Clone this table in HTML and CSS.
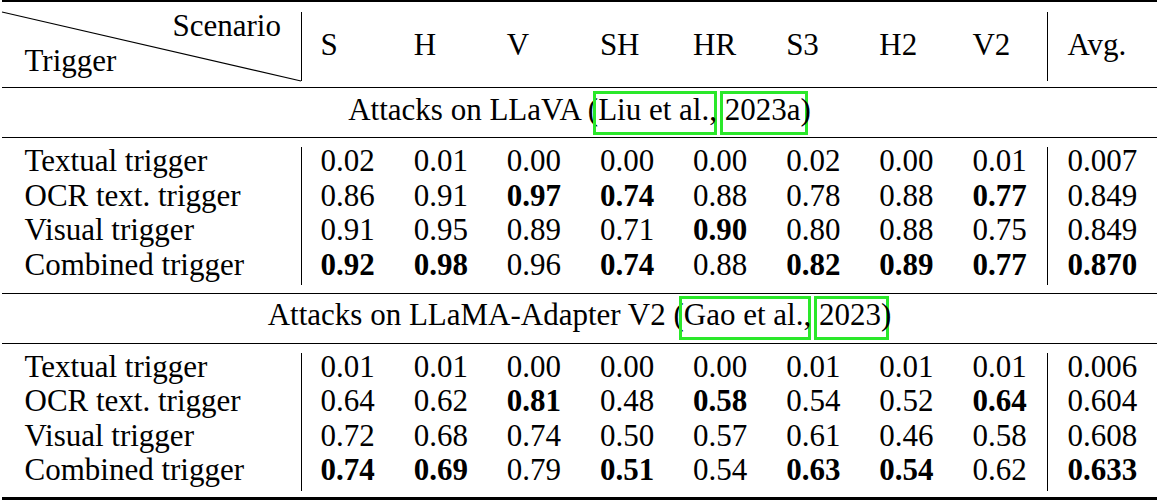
FILE: index.html
```html
<!DOCTYPE html>
<html lang="en">
<head>
<meta charset="utf-8">
<title>Trigger results</title>
<link rel="stylesheet" href="styles.css">
</head>
<body>
<div class="tbl">
  <div class="block head">
    <div class="row">
      <div class="cell label diag">
        <svg class="diag-line" viewBox="0 0 100 100" preserveAspectRatio="none" aria-hidden="true"><line x1="0" y1="0" x2="100" y2="100" vector-effect="non-scaling-stroke"/></svg>
        <div class="sc">Scenario</div>
        <div class="tg">Trigger</div>
      </div>
      <div class="cell hc">S</div>
      <div class="cell hc">H</div>
      <div class="cell hc">V</div>
      <div class="cell hc">SH</div>
      <div class="cell hc">HR</div>
      <div class="cell hc">S3</div>
      <div class="cell hc">H2</div>
      <div class="cell hc">V2</div>
      <div class="cell hc avg">Avg.</div>
    </div>
  </div>

  <div class="block title">
    <div class="ttext">Attacks on LLaVA (<span class="cite">Liu et al.</span>, <span class="cite">2023a</span>)</div>
  </div>

  <div class="block data">
    <div class="row">
      <div class="cell label">Textual trigger</div>
      <div class="cell">0.02</div><div class="cell">0.01</div><div class="cell">0.00</div><div class="cell">0.00</div><div class="cell">0.00</div><div class="cell">0.02</div><div class="cell">0.00</div><div class="cell">0.01</div>
      <div class="cell avg">0.007</div>
    </div>
    <div class="row">
      <div class="cell label">OCR text. trigger</div>
      <div class="cell">0.86</div><div class="cell">0.91</div><div class="cell b">0.97</div><div class="cell b">0.74</div><div class="cell">0.88</div><div class="cell">0.78</div><div class="cell">0.88</div><div class="cell b">0.77</div>
      <div class="cell avg">0.849</div>
    </div>
    <div class="row">
      <div class="cell label">Visual trigger</div>
      <div class="cell">0.91</div><div class="cell">0.95</div><div class="cell">0.89</div><div class="cell">0.71</div><div class="cell b">0.90</div><div class="cell">0.80</div><div class="cell">0.88</div><div class="cell">0.75</div>
      <div class="cell avg">0.849</div>
    </div>
    <div class="row">
      <div class="cell label">Combined trigger</div>
      <div class="cell b">0.92</div><div class="cell b">0.98</div><div class="cell">0.96</div><div class="cell b">0.74</div><div class="cell">0.88</div><div class="cell b">0.82</div><div class="cell b">0.89</div><div class="cell b">0.77</div>
      <div class="cell avg b">0.870</div>
    </div>
  </div>

  <div class="block title">
    <div class="ttext">Attacks on LLaMA-Adapter V2 (<span class="cite">Gao et al.</span>, <span class="cite">2023</span>)</div>
  </div>

  <div class="block data last">
    <div class="row">
      <div class="cell label">Textual trigger</div>
      <div class="cell">0.01</div><div class="cell">0.01</div><div class="cell">0.00</div><div class="cell">0.00</div><div class="cell">0.00</div><div class="cell">0.01</div><div class="cell">0.01</div><div class="cell">0.01</div>
      <div class="cell avg">0.006</div>
    </div>
    <div class="row">
      <div class="cell label">OCR text. trigger</div>
      <div class="cell">0.64</div><div class="cell">0.62</div><div class="cell b">0.81</div><div class="cell">0.48</div><div class="cell b">0.58</div><div class="cell">0.54</div><div class="cell">0.52</div><div class="cell b">0.64</div>
      <div class="cell avg">0.604</div>
    </div>
    <div class="row">
      <div class="cell label">Visual trigger</div>
      <div class="cell">0.72</div><div class="cell">0.68</div><div class="cell">0.74</div><div class="cell">0.50</div><div class="cell">0.57</div><div class="cell">0.61</div><div class="cell">0.46</div><div class="cell">0.58</div>
      <div class="cell avg">0.608</div>
    </div>
    <div class="row">
      <div class="cell label">Combined trigger</div>
      <div class="cell b">0.74</div><div class="cell b">0.69</div><div class="cell">0.79</div><div class="cell b">0.51</div><div class="cell">0.54</div><div class="cell b">0.63</div><div class="cell b">0.54</div><div class="cell">0.62</div>
      <div class="cell avg b">0.633</div>
    </div>
  </div>
</div>
</body>
</html>
```

FILE: styles.css
```css
body {
  margin: 0;
  padding: 0;
  background: #ffffff;
  color: #000000;
  font-family: "Liberation Serif", serif;
  font-size: 31px;
}

.tbl {
  box-sizing: border-box;
  width: 1155px;
  margin-left: 2px;
  border-top: 2px solid #000;
  border-bottom: 3px solid #000;
}

.block {
  border-top: 1px solid #000;
}

.head {
  border-top: none;
  padding: 10px 0 7px;
}

.title {
  padding: 7.5px 0 7px;
  text-align: center;
}

.data {
  padding: 9px 0 7.5px;
}

.data.last {
  padding-bottom: 6px;
}

.row {
  display: grid;
  grid-template-columns: 300px repeat(8, 93.14px) 1fr;
}

.cell {
  box-sizing: border-box;
  padding-left: 18.5px;
  line-height: 27.4px;
  padding-bottom: 7.1px;
  white-space: nowrap;
}

.ttext {
  line-height: 27.4px;
  padding-bottom: 7.1px;
  white-space: nowrap;
}

.label {
  padding-left: 22.5px;
  border-right: 1px solid #000;
}

.avg {
  border-left: 1px solid #000;
  padding-left: 19.5px;
}

.b {
  font-weight: bold;
}

.head .row {
  height: 68px;
}

.hc {
  display: flex;
  align-items: center;
  line-height: 34.5px;
  padding-bottom: 3px;
}

.diag {
  position: relative;
  padding: 0;
}

.diag-line {
  position: absolute;
  left: 0;
  top: 0;
  width: 100%;
  height: 100%;
  overflow: visible;
}

.diag-line line {
  stroke: #000;
  stroke-width: 1.2;
}

.sc {
  text-align: right;
  padding-right: 20px;
  line-height: 27.4px;
  padding-bottom: 7.1px;
}

.tg {
  padding-left: 22.5px;
  line-height: 27.4px;
  padding-bottom: 7.1px;
}

.cite {
  padding: 1px 8px 8px 5px;
  margin: 0 -8px 0 -5px;
  box-shadow: inset 0 0 0 3px #2ae82a;
}
```
